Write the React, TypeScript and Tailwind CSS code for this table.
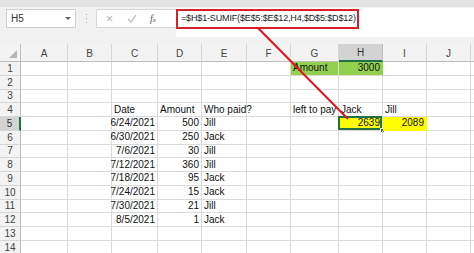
import React from "react";

const cols = ["A", "B", "C", "D", "E", "F", "G", "H", "I", "J", ""];

type Cell = { v: string; right?: boolean; bg?: string };

const cells: Record<string, Cell> = {
  G1: { v: "Amount", bg: "bg-[#92d050] border-[#92d050]" },
  H1: { v: "3000", right: true, bg: "bg-[#92d050] border-r-[#92d050]" },
  C4: { v: "Date" },
  D4: { v: "Amount" },
  E4: { v: "Who paid?" },
  G4: { v: "left to pay" },
  H4: { v: "Jack" },
  I4: { v: "Jill" },
  H5: { v: "2639", right: true, bg: "bg-[#ffff00]" },
  I5: { v: "2089", right: true, bg: "bg-[#ffff00] border-[#ffff00]" },
};

const rows: [string, string, string][] = [
  ["6/24/2021", "500", "Jill"],
  ["6/30/2021", "250", "Jack"],
  ["7/6/2021", "30", "Jill"],
  ["7/12/2021", "360", "Jill"],
  ["7/18/2021", "95", "Jack"],
  ["7/24/2021", "15", "Jack"],
  ["7/30/2021", "21", "Jill"],
  ["8/5/2021", "1", "Jack"],
];
rows.forEach(([d, a, w], i) => {
  const r = i + 5;
  cells["C" + r] = { v: d, right: true };
  cells["D" + r] = { v: a, right: true };
  cells["E" + r] = { v: w };
});

function FormulaBar() {
  return (
    <div className="relative h-[44px] bg-[#f1f1f1]">
      <div className="h-[7px] bg-[#e3e3e3]" />
      <div className="flex items-start">
        <div className="ml-[6px] mt-[2px] flex h-[19px] w-[70px] items-center justify-between border border-[#d0d0d0] bg-white pl-[4px] pr-[4px] text-[10px] text-[#333]">
          <span>H5</span>
          <span className="h-0 w-0 border-x-[3px] border-t-[3px] border-x-transparent border-t-[#666]" />
        </div>
        <div className="ml-[10px] mt-[7px] flex h-[9px] flex-col justify-between">
          <span className="block h-[1px] w-[1px] bg-[#aaa]" />
          <span className="block h-[1px] w-[1px] bg-[#aaa]" />
          <span className="block h-[1px] w-[1px] bg-[#aaa]" />
        </div>
        <div className="ml-[9px] mt-[2px] flex h-[19px] w-[80px] items-center border-y border-l border-[#d8d8d8] bg-white text-[#b0b0b0]">
          <span className="ml-[9px] text-[12px] leading-none">×</span>
          <svg className="ml-[14px]" width="10" height="9" viewBox="0 0 10 9">
            <path d="M1 5 L4 8 L9 1" fill="none" stroke="#b8b8b8" strokeWidth="1.2" />
          </svg>
          <span className="ml-[13px] font-['Liberation_Serif'] text-[10px] italic text-[#555]">
            f<span className="text-[7px]">x</span>
          </span>
        </div>
        <div className="mt-[1px] h-[29px] flex-1 bg-white pt-[1px]">
          <div className="flex h-[20px] w-[183px] items-center whitespace-nowrap border-2 border-[#d9202a] pl-[3px] text-[9px] tracking-[-0.15px] text-[#222]">
            =$H$1-SUMIF($E$5:$E$12,H4,$D$5:$D$12)
          </div>
        </div>
      </div>
    </div>
  );
}

function Grid() {
  const rowNums = Array.from({ length: 14 }, (_, i) => i + 1);
  return (
    <div className="grid grid-cols-[21px_47px_44px_46px_44px_45px_44px_48px_44px_44px_44px_1fr] grid-rows-[18px_repeat(14,13.75px)] text-[10px] text-[#111]">
      <div className="relative border-b border-r border-[#bdbdbd] bg-[#f3f3f3]">
        <span className="absolute bottom-[3px] right-[3px] h-0 w-0 border-b-[8px] border-l-[8px] border-b-[#b5b5b5] border-l-transparent" />
      </div>
      {cols.map((c, i) => (
        <div
          key={i}
          className={
            c === "H"
              ? "flex items-center justify-center border-b-2 border-r border-b-[#217346] border-r-[#bdbdbd] bg-[#d3d3d3] pt-[1px] text-[#333]"
              : "flex items-center justify-center border-b border-r border-b-[#bdbdbd] border-r-[#d6d6d6] bg-[#f3f3f3] pt-[1px] text-[#444]"
          }
        >
          {c}
        </div>
      ))}
      {rowNums.map((r) => (
        <React.Fragment key={r}>
          <div
            className={
              r === 5
                ? "flex items-center justify-center border-b border-r-2 border-b-[#d6d6d6] border-r-[#217346] bg-[#d3d3d3] text-[#333]"
                : "flex items-center justify-center border-b border-r border-b-[#d6d6d6] border-r-[#bdbdbd] bg-[#f3f3f3] text-[#444]"
            }
          >
            {r}
          </div>
          {cols.map((c, i) => {
            const cell = c ? cells[c + r] : undefined;
            const sel = c === "H" && r === 5;
            return (
              <div
                key={i}
                className={`relative flex items-center whitespace-nowrap border-b border-r border-[#dadada] px-[2px] leading-none ${
                  cell?.right ? "justify-end" : "justify-start"
                } ${cell?.bg ?? ""}`}
              >
                {cell?.v}
                {sel && (
                  <>
                    <span className="absolute -left-[1px] -top-[1px] bottom-0 right-0 border-2 border-[#217346]" />
                    <span className="absolute -bottom-[3px] -right-[3px] h-[5px] w-[5px] border border-white bg-[#217346]" />
                  </>
                )}
              </div>
            );
          })}
        </React.Fragment>
      ))}
    </div>
  );
}

export default function App() {
  return (
    <div className="relative h-[253px] w-[474px] overflow-hidden bg-white font-['Liberation_Sans',sans-serif]">
      <FormulaBar />
      <Grid />
      <svg className="pointer-events-none absolute left-0 top-0" width="474" height="253">
        <line x1="258" y1="28" x2="348" y2="119" stroke="#e0141e" strokeWidth="2" />
      </svg>
    </div>
  );
}
